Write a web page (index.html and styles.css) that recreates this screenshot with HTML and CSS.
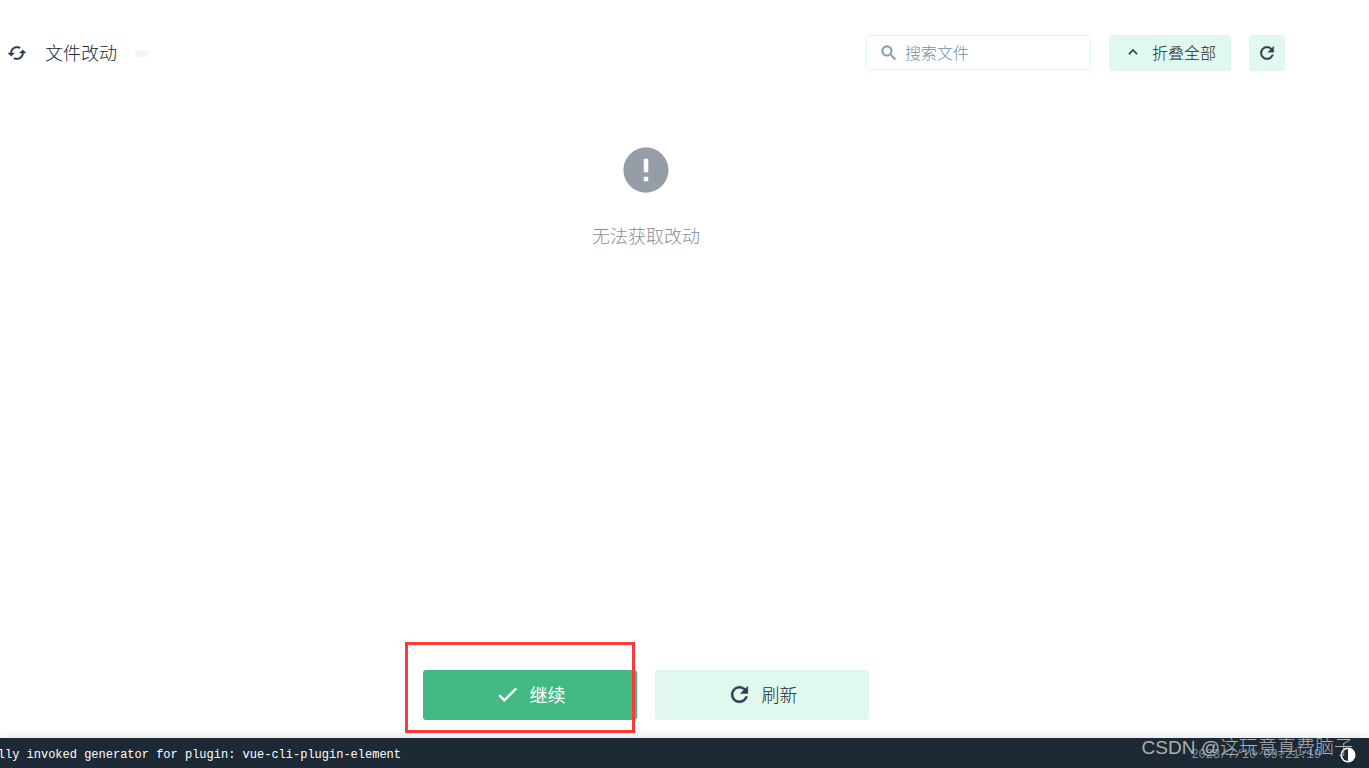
FILE: index.html
```
<!DOCTYPE html>
<html lang="zh-CN">
<head>
    <meta charset="UTF-8">
    <meta name="viewport" content="width=device-width, initial-scale=1.0">
    <title>文件改动</title>
    <link rel="stylesheet" href="styles.css">
</head>
<body>
    <main class="file-diff">
        <header class="toolbar">
            <svg class="icon" viewBox="0 0 24 24" aria-hidden="true"><path d="M19 8l-4 4h3c0 3.31-2.69 6-6 6-1.01 0-1.97-.25-2.8-.7l-1.46 1.46C8.97 19.54 10.43 20 12 20c4.42 0 8-3.58 8-8h3l-4-4zM6 12c0-3.31 2.69-6 6-6 1.01 0 1.97.25 2.8.7l1.46-1.46C15.03 4.46 13.57 4 12 4c-4.42 0-8 3.58-8 8H1l4 4 4-4H6z"/></svg>
            <h1 class="title">文件改动</h1>
            <span class="file-count"></span>
            <label class="search">
                <svg class="icon" viewBox="0 0 24 24" aria-hidden="true"><path d="M15.5 14h-.79l-.28-.27C15.41 12.59 16 11.11 16 9.5 16 5.91 13.09 3 9.5 3S3 5.91 3 9.5 5.91 16 9.5 16c1.61 0 3.09-.59 4.23-1.57l.27.28v.79l5 4.99L20.49 19l-4.99-5zm-6 0C7.01 14 5 11.99 5 9.5S7.01 5 9.5 5 14 7.01 14 9.5 11.99 14 9.5 14z"/></svg>
                <input type="text" class="search-input" placeholder="搜索文件" aria-label="搜索文件">
            </label>
            <button type="button" class="btn btn-collapse">
                <svg class="icon" viewBox="0 0 24 24" aria-hidden="true"><path d="M12 8l-6 6 1.41 1.41L12 10.83l4.59 4.58L18 14z"/></svg>
                折叠全部
            </button>
            <button type="button" class="btn btn-icon" aria-label="刷新改动">
                <svg class="icon" viewBox="0 0 24 24" aria-hidden="true"><path d="M17.65 6.35C16.2 4.9 14.21 4 12 4c-4.42 0-7.99 3.58-7.99 8s3.57 8 7.99 8c3.73 0 6.84-2.55 7.73-6h-2.08c-.82 2.33-3.04 4-5.65 4-3.31 0-6-2.69-6-6s2.69-6 6-6c1.66 0 3.14.69 4.22 1.78L13 11h7V4l-2.35 2.35z"/></svg>
            </button>
        </header>

        <section class="empty">
            <svg class="empty-icon" viewBox="0 0 24 24" aria-hidden="true"><path d="M12 2C6.48 2 2 6.48 2 12s4.48 10 10 10 10-4.48 10-10S17.52 2 12 2zm1 15h-2v-2h2v2zm0-4h-2V7h2v6z"/></svg>
            <p class="empty-text">无法获取改动</p>
        </section>

        <div class="actions">
            <button type="button" class="btn btn-big btn-primary">
                <svg class="icon" viewBox="0 0 24 24" aria-hidden="true"><path d="M9 16.17L4.83 12l-1.42 1.41L9 19 21 7l-1.41-1.41z"/></svg>
                继续
            </button>
            <button type="button" class="btn btn-big">
                <svg class="icon" viewBox="0 0 24 24" aria-hidden="true"><path d="M17.65 6.35C16.2 4.9 14.21 4 12 4c-4.42 0-7.99 3.58-7.99 8s3.57 8 7.99 8c3.73 0 6.84-2.55 7.73-6h-2.08c-.82 2.33-3.04 4-5.65 4-3.31 0-6-2.69-6-6s2.69-6 6-6c1.66 0 3.14.69 4.22 1.78L13 11h7V4l-2.35 2.35z"/></svg>
                刷新
            </button>
            <!-- marca o botão em destaque -->
            <span class="highlight"></span>
        </div>
    </main>

    <footer class="status-bar">
        <div class="log">fully invoked generator for plugin: vue-cli-plugin-element</div>
        <time class="date">2023/7/10 09:21:19</time>
        <svg class="theme" viewBox="0 0 24 24" aria-hidden="true"><circle cx="12" cy="12" r="10" fill="#fff"/><path d="M12 4a8 8 0 0 0 0 16z" fill="#1d2935"/></svg>
        <span class="watermark">CSDN @这玩意真费脑子</span>
    </footer>
</body>
</html>
```

FILE: styles.css
```
:root {
    --green: #42b983;
    --light-green: #e0f8ed;
    --dark: #2c3e50;
    --text: #1d2935;
    --bar: #1d2935;
}

* {
    box-sizing: border-box;
}

body {
    margin: 0;
    min-height: 100vh;
    display: flex;
    flex-direction: column;
    background: #fff;
    color: var(--text);
    font-family: "Noto Sans CJK SC", sans-serif;
    font-weight: 300;
    font-size: 16px;
    overflow: hidden;
}

.icon {
    width: 20px;
    height: 20px;
    flex: none;
    fill: var(--dark);
    stroke: var(--dark);
    stroke-width: 0.4;
}

.file-diff {
    flex: 1;
    display: flex;
    flex-direction: column;
    padding: 35px 84px 18px 7px;
}

.toolbar {
    display: flex;
    align-items: center;
    gap: 18px;
    height: 36px;
}

.title {
    margin: 0;
    padding-bottom: 2px;
    font-size: 18px;
    font-weight: 300;
}

.file-count {
    width: 14px;
    height: 7px;
    border-radius: 3px;
    background: #f6f6f6;
}

.search {
    display: flex;
    align-items: center;
    align-self: flex-start;
    gap: 6px;
    width: 225px;
    height: 35px;
    margin-left: auto;
    padding: 0 12px;
    border: 1px solid var(--light-green);
    border-radius: 3px;
}

.search .icon {
    fill: #7f9fad;
    stroke: #7f9fad;
}

.search-input {
    flex: 1;
    min-width: 0;
    padding: 0 0 2px;
    border: 0;
    outline: none;
    background: transparent;
    color: var(--text);
    font: inherit;
}

.search-input::placeholder {
    color: #6f919f;
    opacity: 1;
}

.btn {
    display: flex;
    align-items: center;
    justify-content: center;
    gap: 10px;
    height: 36px;
    padding: 0 15px 2px;
    border: 0;
    border-radius: 3px;
    background: var(--light-green);
    color: var(--text);
    font: inherit;
    cursor: pointer;
}

.btn:hover {
    opacity: 0.9;
}

.btn-collapse .icon {
    width: 18px;
    height: 18px;
}

.btn-icon {
    width: 36px;
    padding: 0;
}

.empty {
    flex: 1;
    display: flex;
    flex-direction: column;
    align-items: center;
    gap: 25px;
    padding-top: 72px;
    color: #959da7;
}

.empty-icon {
    width: 54px;
    height: 54px;
    fill: currentColor;
}

.empty-text {
    margin: 0;
    color: #85909b;
    font-size: 18px;
    line-height: 27px;
}

.actions {
    position: relative;
    display: flex;
    gap: 18px;
    margin: 0 auto;
}

.btn-big {
    width: 214px;
    height: 50px;
    font-size: 18px;
}

.btn-big .icon {
    width: 25px;
    height: 25px;
}

.btn-primary {
    background: var(--green);
    color: #fff;
    font-weight: 400;
}

.btn-primary .icon {
    fill: #fff;
    stroke: #fff;
}

.highlight {
    position: absolute;
    top: -28px;
    left: -18px;
    width: 230px;
    height: 91px;
    border: 3px solid #ff3838;
    pointer-events: none;
}

.status-bar {
    position: relative;
    display: flex;
    align-items: center;
    height: 30px;
    padding: 4px 12px 0 0;
    background: var(--bar);
    box-shadow: 0 -2px 10px rgba(0, 0, 0, 0.1);
    color: #fff;
    font-family: "Liberation Mono", monospace;
    font-size: 12px;
    font-weight: 400;
}

.log {
    display: flex;
    justify-content: flex-end;
    width: 401px;
    white-space: nowrap;
}

.date {
    margin-left: auto;
    color: #87909a;
}

.theme {
    width: 18px;
    height: 18px;
    margin-left: 18px;
}

.watermark {
    position: absolute;
    right: 16px;
    bottom: 8px;
    color: rgba(200, 200, 200, 0.85);
    font-family: "Liberation Sans", "Noto Sans CJK SC", sans-serif;
    font-size: 19px;
    font-weight: 300;
    line-height: 24px;
    white-space: nowrap;
}
```
